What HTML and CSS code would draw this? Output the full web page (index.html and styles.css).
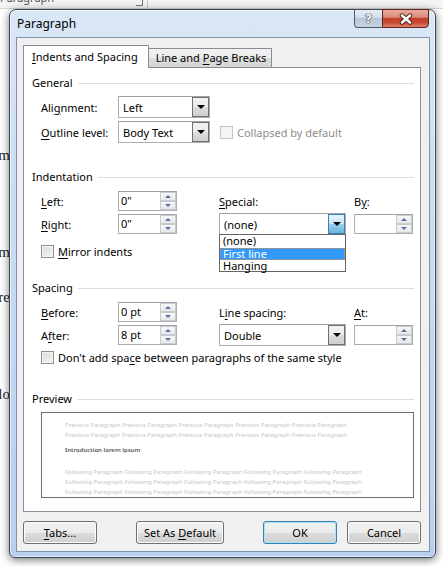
FILE: index.html
```html
<!DOCTYPE html>
<html lang="en">
<head>
    <meta charset="UTF-8">
    <meta name="viewport" content="width=device-width, initial-scale=1.0">
    <title>Paragraph</title>
    <link rel="stylesheet" href="styles.css">
</head>
<body>
    <div class="ribbon">
        <span class="ribbon-label">Paragraph</span>
        <span class="launcher"></span>
        <span class="ribbon-sep"></span>
    </div>

    <div class="doc">
        <div class="doc-line">lorem</div>
        <div class="doc-line gap-long">lorem</div>
        <div class="doc-line gap-short">are</div>
        <div class="doc-line gap-long">lo</div>
    </div>

    <div class="dialog">
        <div class="titlebar">Paragraph</div>
        <div class="caption-btns">
            <button class="cap cap-help" title="Help">?</button>
            <button class="cap cap-close" title="Close">
                <svg width="16" height="12" viewBox="0 0 16 12">
                    <path d="M4 2.5 L12 9.5 M12 2.5 L4 9.5" stroke="#4a2019" stroke-width="4.4" stroke-linecap="round"/>
                    <path d="M4 2.5 L12 9.5 M12 2.5 L4 9.5" stroke="#fff" stroke-width="2.6" stroke-linecap="round"/>
                </svg>
            </button>
        </div>

        <div class="client">
            <div class="tabs">
                <div class="tab tab-active"><u>I</u>ndents and Spacing</div>
                <div class="tab">Line and <u>P</u>age Breaks</div>
            </div>

            <div class="panel">
                <!-- General -->
                <div class="group-head">General</div>
                <div class="grid grid-general">
                    <div class="label">Ali<u>g</u>nment:</div>
                    <div class="select select-short">
                        <span class="select-val">Left</span>
                        <span class="drop"><i></i></span>
                    </div>
                    <div></div>
                    <div></div>

                    <div class="label"><u>O</u>utline level:</div>
                    <div class="select select-short">
                        <span class="select-val">Body Text</span>
                        <span class="drop"><i></i></span>
                    </div>
                    <div class="check-row span-2">
                        <span class="check check-disabled"></span>
                        <span class="disabled-text">Collapsed by default</span>
                    </div>
                </div>

                <!-- Indentation -->
                <div class="group-head head-indent">Indentation</div>
                <div class="grid grid-pair">
                    <div class="label"><u>L</u>eft:</div>
                    <div class="spin">
                        <span class="spin-val">0"</span>
                        <span class="spin-btns"><span class="spin-up"><i></i></span><span class="spin-down"><i></i></span></span>
                    </div>
                    <div class="label"><u>S</u>pecial:</div>
                    <div class="label">B<u>y</u>:</div>

                    <div class="label"><u>R</u>ight:</div>
                    <div class="spin">
                        <span class="spin-val">0"</span>
                        <span class="spin-btns"><span class="spin-up"><i></i></span><span class="spin-down"><i></i></span></span>
                    </div>
                    <div class="combo">
                        <div class="select select-wide">
                            <span class="select-val">(none)</span>
                            <span class="drop drop-hot"><i></i></span>
                        </div>
                        <ul class="droplist">
                            <li>(none)</li>
                            <li class="picked">First line</li>
                            <li>Hanging</li>
                        </ul>
                    </div>
                    <div class="spin">
                        <span class="spin-val"></span>
                        <span class="spin-btns"><span class="spin-up"><i></i></span><span class="spin-down"><i></i></span></span>
                    </div>
                </div>
                <div class="check-row row-mirror">
                    <span class="check"></span>
                    <span><u>M</u>irror indents</span>
                </div>

                <!-- Spacing -->
                <div class="group-head head-spacing">Spacing</div>
                <div class="grid grid-pair">
                    <div class="label"><u>B</u>efore:</div>
                    <div class="spin">
                        <span class="spin-val">0 pt</span>
                        <span class="spin-btns"><span class="spin-up"><i></i></span><span class="spin-down"><i></i></span></span>
                    </div>
                    <div class="label">L<u>i</u>ne spacing:</div>
                    <div class="label"><u>A</u>t:</div>

                    <div class="label">A<u>f</u>ter:</div>
                    <div class="spin">
                        <span class="spin-val">8 pt</span>
                        <span class="spin-btns"><span class="spin-up"><i></i></span><span class="spin-down"><i></i></span></span>
                    </div>
                    <div class="select select-wide">
                        <span class="select-val">Double</span>
                        <span class="drop"><i></i></span>
                    </div>
                    <div class="spin">
                        <span class="spin-val"></span>
                        <span class="spin-btns"><span class="spin-up"><i></i></span><span class="spin-down"><i></i></span></span>
                    </div>
                </div>
                <div class="check-row row-dontadd">
                    <span class="check"></span>
                    <span>Don't add spa<u>c</u>e between paragraphs of the same style</span>
                </div>

                <!-- Preview -->
                <div class="group-head head-preview">Preview</div>
                <div class="preview">
                    <div class="pv-line">Previous Paragraph Previous Paragraph Previous Paragraph Previous Paragraph Previous Paragraph</div>
                    <div class="pv-line">Previous Paragraph Previous Paragraph Previous Paragraph Previous Paragraph Previous Paragraph</div>
                    <div class="pv-line pv-main">Introduction lorem ipsum</div>
                    <div class="pv-line pv-follow">Following Paragraph Following Paragraph Following Paragraph Following Paragraph Following Paragraph</div>
                    <div class="pv-line">Following Paragraph Following Paragraph Following Paragraph Following Paragraph Following Paragraph</div>
                    <div class="pv-line">Following Paragraph Following Paragraph Following Paragraph Following Paragraph Following Paragraph</div>
                </div>
            </div>

            <div class="buttons">
                <button class="btn btn-tabs"><u>T</u>abs...</button>
                <button class="btn btn-default">Set As <u>D</u>efault</button>
                <button class="btn btn-ok">OK</button>
                <button class="btn btn-cancel">Cancel</button>
            </div>
        </div>
    </div>
</body>
</html>
```

FILE: styles.css
```css
body {
    margin: 0;
    height: 566px;
    overflow: hidden;
    position: relative;
    background-color: #fff;
    font-family: "Noto Sans", sans-serif;
    font-size: 11px;
    color: #000;
}

u {
    text-decoration: underline;
    text-underline-offset: 2px;
}

/* Word window behind the dialog */
.ribbon {
    height: 8px;
    display: flex;
    overflow: hidden;
    background-color: #f4f4f4;
    border-bottom: 1px solid #d6d6d6;
}

.ribbon-label {
    margin-top: -9px;
    line-height: 14px;
    color: #555;
    width: 136px;
}

.launcher {
    width: 6px;
    height: 5px;
    border-right: 1px solid #777;
    border-bottom: 1px solid #777;
}

.ribbon-sep {
    width: 1px;
    margin-left: 4px;
    background-color: #c8c8c8;
}

.doc {
    padding-top: 136px;
    font-family: "Liberation Serif", serif;
    font-size: 15px;
    color: #222;
}

.doc-line {
    width: 10px;
    height: 20px;
    line-height: 20px;
    overflow: hidden;
    direction: rtl;
    white-space: nowrap;
}

.gap-long {
    margin-top: 77px;
}

.gap-short {
    margin-top: 25px;
}

/* Dialog window */
.dialog {
    position: absolute;
    left: 9px;
    top: 9px;
    width: 425px;
    height: 547px;
    border: 1px solid #3c4654;
    border-radius: 7px 7px 6px 6px;
    background: linear-gradient(to bottom, #dae7f6 0%, #cadcf2 35%, #b7d0ef 100%);
    box-shadow: 0 2px 9px rgba(0, 0, 0, 0.55), inset 0 0 0 1px rgba(255, 255, 255, 0.6);
    display: flex;
    flex-direction: column;
}

.titlebar {
    height: 27px;
    line-height: 27px;
    padding-left: 7px;
    font-size: 12px;
    color: #000;
}

.caption-btns {
    position: absolute;
    top: -1px;
    left: 344px;
    display: flex;
}

.cap {
    height: 19px;
    margin: 0;
    padding: 0;
    border: 1px solid #4c5866;
    border-top-color: #3c4654;
    display: flex;
    align-items: center;
    justify-content: center;
}

.cap-help {
    width: 28px;
    border-right: none;
    border-radius: 0 0 0 4px;
    background: linear-gradient(to bottom, #e6edf5 0%, #d3dde9 45%, #b9c7d8 50%, #c6d3e3 100%);
    font-family: "DejaVu Sans", sans-serif;
    font-weight: bold;
    font-size: 13px;
    color: #f4f6f8;
    text-shadow: 0 0 1px #2d3641, 0 0 1px #2d3641, 0 0 1px #2d3641;
}

.cap-close {
    width: 47px;
    border-radius: 0 0 4px 0;
    border-color: #5e2219;
    background: linear-gradient(to bottom, #e9aa9d 0%, #dc8c7d 42%, #c2412b 50%, #c84a33 75%, #e0806b 100%);
}

.client {
    flex: 1;
    margin: 0 5px 5px 6px;
    border: 1px solid #8193ab;
    background-color: #f0f0f0;
    padding: 7px 8px 7px 6px;
    display: flex;
    flex-direction: column;
}

/* Tabs */
.tabs {
    display: flex;
    align-items: flex-end;
    height: 22px;
}

.tab {
    height: 18px;
    line-height: 18px;
    padding: 0 5px 0 7px;
    margin-left: -1px;
    white-space: nowrap;
    border: 1px solid #898c95;
    border-bottom: none;
    background: linear-gradient(to bottom, #f2f2f2 0%, #ebebeb 50%, #dddddd 51%, #d6d6d6 100%);
}

.tab-active {
    position: relative;
    z-index: 1;
    margin-left: 0;
    height: 22px;
    line-height: 22px;
    margin-bottom: -1px;
    padding: 0 10px 0 8px;
    background: #fff;
}

.panel {
    background-color: #fff;
    border: 1px solid #898c95;
    padding: 7px 6px 13px 8px;
}

.group-head {
    display: flex;
    align-items: center;
    height: 16px;
    line-height: 16px;
}

.group-head::after {
    content: "";
    flex: 1;
    height: 1px;
    margin-left: 5px;
    background-color: #d5dfe5;
}

.head-indent {
    margin-top: 26px;
}

.head-spacing {
    margin-top: 22px;
}

.head-preview {
    margin-top: 27px;
}

.grid {
    display: grid;
    grid-template-columns: 77px 101px 135px 59px;
    margin: 5px 0 0 9px;
}

.grid-general {
    grid-auto-rows: 22px;
    row-gap: 3px;
}

.grid-pair {
    grid-auto-rows: 22px;
    row-gap: 1px;
}

.label {
    display: flex;
    align-items: center;
}

.span-2 {
    grid-column: span 2;
}

/* Combo box */
.select {
    box-sizing: border-box;
    height: 22px;
    border: 1px solid #abadb3;
    border-top-color: #a0a3aa;
    background-color: #fff;
    display: flex;
    align-items: center;
    justify-content: space-between;
}

.select-short {
    width: 92px;
}

.select-wide {
    width: 127px;
}

.select-val {
    padding-left: 4px;
}

.drop {
    box-sizing: border-box;
    width: 17px;
    height: 20px;
    border: 1px solid #707070;
    background: linear-gradient(to bottom, #f2f2f2 0%, #ebebeb 50%, #dddddd 51%, #cfcfcf 100%);
    display: flex;
    align-items: center;
    justify-content: center;
}

.drop i {
    width: 0;
    height: 0;
    border-left: 4px solid transparent;
    border-right: 4px solid transparent;
    border-top: 4px solid #000;
}

.drop-hot {
    border-color: #3c7fb1;
    background: linear-gradient(to bottom, #e5f4fc 0%, #c4e5f6 50%, #98d1ef 51%, #68b3db 100%);
}

.combo {
    position: relative;
}

.droplist {
    position: absolute;
    left: 0;
    top: 21px;
    z-index: 2;
    width: 127px;
    height: 38px;
    box-sizing: border-box;
    margin: 0;
    padding: 0;
    list-style: none;
    border: 1px solid #646464;
    background-color: #fff;
}

.droplist li {
    box-sizing: border-box;
    height: 12px;
    line-height: 12px;
    padding-left: 3px;
}

.droplist li:first-child {
    height: 13px;
}

.droplist .picked {
    background-color: #3399ff;
    color: #fff;
    outline: 1px dotted #e8913a;
    outline-offset: -1px;
}

/* Spin box */
.spin {
    box-sizing: border-box;
    width: 59px;
    height: 20px;
    align-self: center;
    border: 1px solid #abadb3;
    border-top-color: #a0a3aa;
    background-color: #fff;
    display: flex;
    justify-content: space-between;
}

.spin-val {
    padding-left: 2px;
    line-height: 18px;
}

.spin-btns {
    width: 16px;
    display: flex;
    flex-direction: column;
}

.spin-up,
.spin-down {
    flex: 1;
    box-sizing: border-box;
    border: 1px solid #c6cbd2;
    background: linear-gradient(to bottom, #f7f7f7 0%, #e8e8e8 100%);
    display: flex;
    align-items: center;
    justify-content: center;
}

.spin-up i {
    border-left: 3px solid transparent;
    border-right: 3px solid transparent;
    border-bottom: 3px solid #5a6ea8;
}

.spin-down i {
    border-left: 3px solid transparent;
    border-right: 3px solid transparent;
    border-top: 3px solid #5a6ea8;
}

/* Check boxes */
.check-row {
    display: flex;
    align-items: center;
    gap: 4px;
}

.row-mirror {
    height: 13px;
    margin: 10px 0 0 9px;
}

.row-dontadd {
    height: 13px;
    margin: 5px 0 0 9px;
}

.grid-general .check-row {
    padding-left: 1px;
}

.check {
    box-sizing: border-box;
    width: 13px;
    height: 13px;
    border: 1px solid #8e8f8f;
    background: linear-gradient(135deg, #dcdcdc 0%, #f4f4f4 100%);
    box-shadow: inset 0 0 0 1px #f4f4f4;
}

.check-disabled {
    border-color: #c5c5c5;
    background: #f4f4f4;
}

.disabled-text {
    color: #8d8d8d;
}

/* Preview */
.preview {
    box-sizing: border-box;
    height: 86px;
    margin: 5px 0 0 9px;
    border: 1px solid #6e6e6e;
    background-color: #fff;
    padding: 7px 0 0 23px;
    overflow: hidden;
}

.pv-line {
    height: 10px;
    line-height: 10px;
    font-size: 6px;
    white-space: nowrap;
    color: #c6c6c6;
}

.pv-main {
    margin-top: 5px;
    color: #555;
    font-weight: 600;
}

.pv-follow {
    margin-top: 12px;
}

/* Bottom buttons */
.buttons {
    display: flex;
    margin-top: 9px;
}

.btn {
    width: 74px;
    height: 23px;
    margin: 0;
    padding: 0;
    border: 1px solid #707070;
    border-radius: 3px;
    background: linear-gradient(to bottom, #f2f2f2 0%, #ebebeb 50%, #dddddd 51%, #cfcfcf 100%);
    box-shadow: inset 0 0 0 1px #fcfcfc;
    font-family: "Noto Sans", sans-serif;
    font-size: 11px;
    color: #000;
}

.btn-default {
    width: 88px;
    margin-left: 39px;
}

.btn-ok {
    margin-left: 39px;
    border-color: #3c7fb1;
    box-shadow: inset 0 0 0 1px #a6e2f8;
}

.btn-cancel {
    margin-left: 10px;
}
```
